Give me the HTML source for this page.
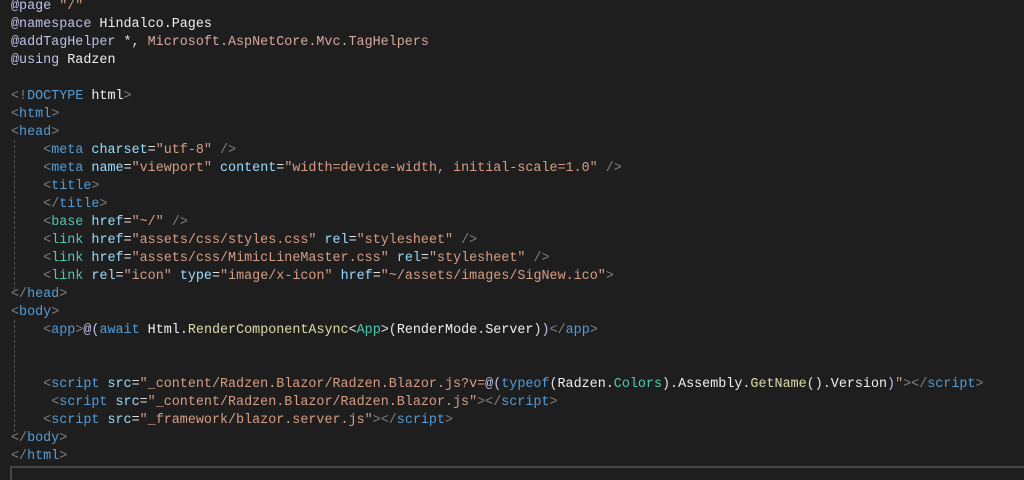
<!DOCTYPE html>
<html><head><style>
body{margin:0;width:1024px;height:480px;background:#1e1e1e;overflow:hidden;position:relative}
pre{margin:0;position:absolute;left:11px;top:-2px;font-family:"Liberation Mono",monospace;font-size:13.4px;line-height:18px;color:#e0e0e0;white-space:pre}
.d{color:#c0c0e8}.b{color:#808080}.t{color:#569cd6}.a{color:#9cdcfe}.s{color:#d69d85}.g{color:#4ec9b0}.y{color:#dcdcaa}.w{color:#f0f0f0}.p{color:#d8a8a0}
.guide{position:absolute;left:14px;width:0;border-left:1px dashed #555}
</style></head><body>
<div class="guide" style="top:140px;height:150px"></div>
<div class="guide" style="top:320px;height:112px"></div>
<pre><span class="d">@page</span> <span class="s">"/"</span>
<span class="d">@namespace</span> <span class="w">Hindalco.Pages</span>
<span class="d">@addTagHelper</span> *, <span class="p">Microsoft.AspNetCore.Mvc.TagHelpers</span>
<span class="d">@using</span> <span class="w">Radzen</span>

<span class="b">&lt;!</span><span class="t">DOCTYPE</span> <span class="w">html</span><span class="b">&gt;</span>
<span class="b">&lt;</span><span class="t">html</span><span class="b">&gt;</span>
<span class="b">&lt;</span><span class="t">head</span><span class="b">&gt;</span>
    <span class="b">&lt;</span><span class="t">meta</span> <span class="a">charset</span>=<span class="s">"utf-8"</span> <span class="b">/&gt;</span>
    <span class="b">&lt;</span><span class="t">meta</span> <span class="a">name</span>=<span class="s">"viewport"</span> <span class="a">content</span>=<span class="s">"width=device-width, initial-scale=1.0"</span> <span class="b">/&gt;</span>
    <span class="b">&lt;</span><span class="t">title</span><span class="b">&gt;</span>
    <span class="b">&lt;/</span><span class="t">title</span><span class="b">&gt;</span>
    <span class="b">&lt;</span><span class="g">base</span> <span class="a">href</span>=<span class="s">"~/"</span> <span class="b">/&gt;</span>
    <span class="b">&lt;</span><span class="g">link</span> <span class="a">href</span>=<span class="s">"assets/css/styles.css"</span> <span class="a">rel</span>=<span class="s">"stylesheet"</span> <span class="b">/&gt;</span>
    <span class="b">&lt;</span><span class="g">link</span> <span class="a">href</span>=<span class="s">"assets/css/MimicLineMaster.css"</span> <span class="a">rel</span>=<span class="s">"stylesheet"</span> <span class="b">/&gt;</span>
    <span class="b">&lt;</span><span class="g">link</span> <span class="a">rel</span>=<span class="s">"icon"</span> <span class="a">type</span>=<span class="s">"image/x-icon"</span> <span class="a">href</span>=<span class="s">"~/assets/images/SigNew.ico"</span><span class="b">&gt;</span>
<span class="b">&lt;/</span><span class="t">head</span><span class="b">&gt;</span>
<span class="b">&lt;</span><span class="t">body</span><span class="b">&gt;</span>
    <span class="b">&lt;</span><span class="t">app</span><span class="b">&gt;</span><span class="d">@(</span><span class="t">await</span> <span class="w">Html</span>.<span class="y">RenderComponentAsync</span>&lt;<span class="g">App</span>&gt;(<span class="w">RenderMode</span>.<span class="w">Server</span>)<span class="d">)</span><span class="b">&lt;/</span><span class="t">app</span><span class="b">&gt;</span>


    <span class="b">&lt;</span><span class="t">script</span> <span class="a">src</span>=<span class="s">"_content/Radzen.Blazor/Radzen.Blazor.js?v=</span><span class="d">@(</span><span class="t">typeof</span>(<span class="w">Radzen</span>.<span class="g">Colors</span>).<span class="w">Assembly</span>.<span class="y">GetName</span>().<span class="w">Version</span><span class="d">)</span><span class="s">"</span><span class="b">&gt;&lt;/</span><span class="t">script</span><span class="b">&gt;</span>
     <span class="b">&lt;</span><span class="t">script</span> <span class="a">src</span>=<span class="s">"_content/Radzen.Blazor/Radzen.Blazor.js"</span><span class="b">&gt;&lt;/</span><span class="t">script</span><span class="b">&gt;</span>
    <span class="b">&lt;</span><span class="t">script</span> <span class="a">src</span>=<span class="s">"_framework/blazor.server.js"</span><span class="b">&gt;&lt;/</span><span class="t">script</span><span class="b">&gt;</span>
<span class="b">&lt;/</span><span class="t">body</span><span class="b">&gt;</span>
<span class="b">&lt;/</span><span class="t">html</span><span class="b">&gt;</span></pre>
<div style="position:absolute;left:10px;top:466px;width:1014px;height:14px;border-top:2px solid #464646;border-left:2px solid #464646;box-sizing:border-box"></div>
</body></html>
